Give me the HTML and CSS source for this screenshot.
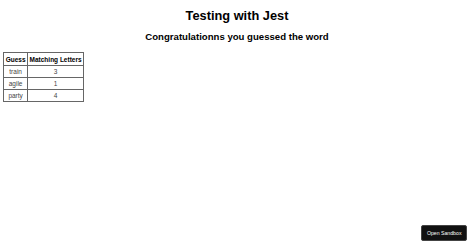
FILE: index.html
```html
<!DOCTYPE html>
<html>
<head>
<meta charset="utf-8">
<link rel="stylesheet" href="styles.css">
</head>
<body>
<div class="app">
  <h1 class="title">Testing with Jest</h1>
  <h2 class="subtitle">Congratulationns you guessed the word</h2>
  <table class="guesses">
    <thead>
      <tr><th>Guess</th><th>Matching Letters</th></tr>
    </thead>
    <tbody>
      <tr><td>train</td><td>3</td></tr>
      <tr><td>agile</td><td>1</td></tr>
      <tr><td>party</td><td>4</td></tr>
    </tbody>
  </table>
</div>
<a class="sandbox-btn">Open Sandbox</a>
</body>
</html>
```
FILE: styles.css
```css
html, body {
  background: #fff;
}
body {
  margin: 3.2px;
  font-family: "Liberation Sans", Arial, sans-serif;
  color: #000;
}
.app {
  padding-top: 0.1px;
}
.title {
  font-size: 12.8px;
  margin: 4.6px 0 8.6px;
  text-align: center;
  font-weight: bold;
}
.subtitle {
  font-size: 9.6px;
  margin: 8px 0;
  text-align: center;
  font-weight: bold;
}
.guesses {
  border-collapse: collapse;
  border: 1px solid #666;
  font-size: 6.5px;
  margin-top: 10px;
}
.guesses th, .guesses td {
  border: 1px solid #666;
  padding: 2.1px 1.5px;
  text-align: center;
}
.guesses td {
  color: #444;
}
.sandbox-btn {
  position: fixed;
  right: 7px;
  bottom: 7px;
  background: #111;
  color: #fff;
  font-size: 5.2px;
  padding: 4px 4.5px;
  border-radius: 2px;
  border: 0.5px solid #444;
}
```
